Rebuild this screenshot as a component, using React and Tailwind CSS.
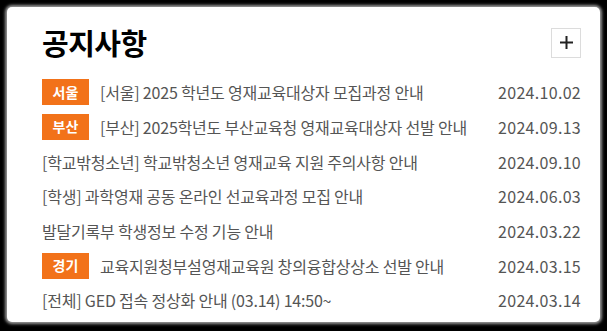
import React from "react";

const rows = [
  { badge: "서울", text: "[서울] 2025 학년도 영재교육대상자 모집과정 안내", date: "2024.10.02" },
  { badge: "부산", text: "[부산] 2025학년도 부산교육청 영재교육대상자 선발 안내", date: "2024.09.13" },
  { text: "[학교밖청소년] 학교밖청소년 영재교육 지원 주의사항 안내", date: "2024.09.10" },
  { text: "[학생] 과학영재 공동 온라인 선교육과정 모집 안내", date: "2024.06.03" },
  { text: "발달기록부 학생정보 수정 기능 안내", date: "2024.03.22" },
  { badge: "경기", text: "교육지원청부설영재교육원 창의융합상상소 선발 안내", date: "2024.03.15" },
  { text: "[전체] GED 접속 정상화 안내 (03.14) 14:50~", date: "2024.03.14" },
];

export default function App() {
  return (
    <div
      className="w-[607px] h-[331px] bg-black p-[7px] overflow-hidden"
      style={{ fontFamily: '"Noto Sans CJK KR", "Noto Sans", sans-serif' }}
    >
      <div className="w-full h-[315px] bg-white rounded-[5px] shadow-[0_0_3px_2px_#9a9a9a] pl-[35px] pr-[19px] pt-[16px]">
        <div className="flex items-center justify-between h-[39px]">
          <h2 className="text-[29px] font-bold text-black leading-none tracking-[-0.5px]">공지사항</h2>
          <button className="w-[30px] h-[30px] border border-[#dcdcdc] flex items-center justify-center">
            <svg width="15" height="15" viewBox="0 0 15 15">
              <path d="M7.5 1v13M1 7.5h13" stroke="#222" strokeWidth="2" />
            </svg>
          </button>
        </div>
        <ul className="mt-[13px]">
          {rows.map((r, i) => (
            <li key={i} className="flex items-center h-[34.67px] text-[16px] text-[#555]">
              {r.badge && (
                <span className="w-[47px] h-[26px] bg-[#f27219] text-white font-bold text-[14px] flex items-center justify-center mr-[11px] shrink-0">
                  {r.badge}
                </span>
              )}
              <span className="flex-1 truncate tracking-[-0.2px]">{r.text}</span>
              <span className="shrink-0 text-[16px] tracking-[0.3px] text-[#555]">{r.date}</span>
            </li>
          ))}
        </ul>
      </div>
    </div>
  );
}
